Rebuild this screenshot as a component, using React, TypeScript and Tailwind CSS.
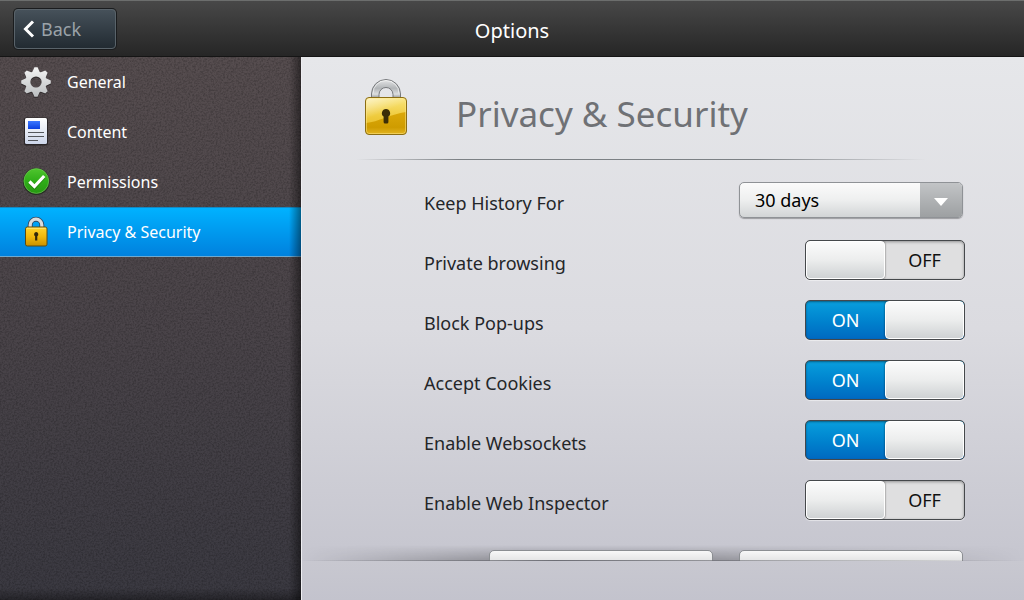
import { useState, type ReactNode } from "react";

function GearIcon() {
  const teeth = [0, 45, 90, 135, 180, 225, 270, 315];
  return (
    <svg viewBox="0 0 32 32" className="size-8" aria-hidden="true">
      <defs>
        <linearGradient id="gear" x1="0" y1="0" x2="0" y2="32" gradientUnits="userSpaceOnUse">
          <stop offset="0" stopColor="#f6f6f6" />
          <stop offset="1" stopColor="#b9bcbe" />
        </linearGradient>
        <mask id="gearShape">
          <circle cx="16" cy="16" r="10.600" fill="#fff" />
          {teeth.map((a) => (
            <path key={a} d="M11.600 7.500 14.400 1.200h3.200L20.400 7.500z" fill="#fff" transform={`rotate(${a} 16 16)`} />
          ))}
          <circle cx="16" cy="16" r="5.600" fill="#000" />
        </mask>
      </defs>
      <g transform="translate(0 1)">
        <rect width="32" height="32" fill="#171416" opacity=".6" mask="url(#gearShape)" />
      </g>
      <rect width="32" height="32" fill="url(#gear)" mask="url(#gearShape)" />
    </svg>
  );
}

function DocumentIcon() {
  return (
    <svg viewBox="0 0 32 32" className="size-8" aria-hidden="true">
      <defs>
        <linearGradient id="page" x1="0" y1="0" x2="0" y2="1">
          <stop offset="0" stopColor="#fff" />
          <stop offset="1" stopColor="#cdd6ea" />
        </linearGradient>
        <linearGradient id="pageBlue" x1="0" y1="0" x2="0" y2="1">
          <stop offset="0" stopColor="#3c78ff" />
          <stop offset="1" stopColor="#0a3fe0" />
        </linearGradient>
      </defs>
      <rect x="4" y="1.500" width="24" height="28" rx="2" fill="#1d191b" opacity=".7" />
      <rect x="5" y="2" width="22" height="26" rx="1.500" fill="url(#page)" />
      <rect x="8" y="5" width="12" height="8" fill="url(#pageBlue)" />
      <path d="M8 16.500h16M8 20.500h16M8 24.500h10" stroke="#54575c" strokeWidth="1" />
    </svg>
  );
}

function CheckIcon() {
  return (
    <svg viewBox="0 0 32 32" className="size-8" aria-hidden="true">
      <defs>
        <linearGradient id="disc" x1="0" y1="0" x2="0" y2="1">
          <stop offset="0" stopColor="#4fc52e" />
          <stop offset=".5" stopColor="#2fae18" />
          <stop offset="1" stopColor="#279812" />
        </linearGradient>
      </defs>
      <circle cx="16.3" cy="15.5" r="13.4" fill="#1c2a18" opacity=".8" />
      <circle cx="16.3" cy="15" r="12.4" fill="url(#disc)" stroke="#7bd45f" strokeWidth=".6" />
      <path d="m9.400 15.500 5 5 9.800-10.500" fill="none" stroke="#145c08" strokeWidth="3.400" opacity=".4" transform="translate(0 1)" />
      <path d="m9.400 15.500 5 5 9.800-10.500" fill="none" stroke="#fff" strokeWidth="3.200" />
    </svg>
  );
}

function SmallLockIcon() {
  return (
    <svg viewBox="0 0 32 32" className="size-8" aria-hidden="true">
      <defs>
        <linearGradient id="smallBody" x1="0" y1="0" x2="0" y2="1">
          <stop offset="0" stopColor="#ffd52e" />
          <stop offset=".5" stopColor="#f2b90c" />
          <stop offset="1" stopColor="#c99100" />
        </linearGradient>
      </defs>
      <path d="M10.200 12.500V9a5.800 5.800 0 0 1 11.600 0v3.500" fill="none" stroke="#2f4b63" strokeWidth="5" />
      <path d="M10.200 12.500V9a5.800 5.800 0 0 1 11.600 0v3.500" fill="none" stroke="#d9dcde" strokeWidth="3.200" />
      <rect x="5.500" y="11" width="21.500" height="19" rx="1.800" fill="url(#smallBody)" stroke="#5c4a10" />
      <path d="M6.800 12.300h19" stroke="#ffe98a" strokeWidth=".8" />
      <path d="M16.200 16a2.300 2.300 0 0 1 1.100 4.200V24.500h-2.200v-4.300a2.300 2.300 0 0 1 1.100-4.200z" fill="#33270a" />
    </svg>
  );
}

function LargeLockIcon() {
  return (
    <svg viewBox="0 0 44 60" className="h-15 w-11 shrink-0" aria-hidden="true">
      <defs>
        <linearGradient id="body" x1="0" y1="0" x2="0" y2="1">
          <stop offset="0" stopColor="#f9e57c" />
          <stop offset=".5" stopColor="#efcb3e" />
          <stop offset="1" stopColor="#e3b51c" />
        </linearGradient>
        <linearGradient id="shade" x1="0" y1="0" x2="0" y2="1">
          <stop offset="0" stopColor="#dba80a" />
          <stop offset=".7" stopColor="#cf9c00" />
          <stop offset="1" stopColor="#e2b320" />
        </linearGradient>
        <linearGradient id="glow" x1="0" y1="0" x2=".7" y2="1">
          <stop offset="0" stopColor="#fff" stopOpacity=".6" />
          <stop offset=".6" stopColor="#fff" stopOpacity="0" />
        </linearGradient>
        <linearGradient id="steel" x1="0" y1="0" x2="0" y2="1">
          <stop offset="0" stopColor="#e6e7e8" />
          <stop offset=".45" stopColor="#b2b5b8" />
          <stop offset=".75" stopColor="#dcdedf" />
          <stop offset="1" stopColor="#808386" />
        </linearGradient>
      </defs>
      <path
        d="M7.500 21V16a14.500 14.500 0 0 1 29 0v5h-7.500V16.500a7 7 0 0 0-14 0V21z"
        fill="url(#steel)"
        stroke="#77797c"
        strokeWidth="1"
      />
      <path d="M9 15.500a13 13 0 0 1 26 0" fill="none" stroke="#fff" strokeWidth="1" opacity=".6" />
      <rect x="1.500" y="19.500" width="41" height="37" rx="3.500" fill="url(#body)" />
      <path d="M2 45C14 44 27 36 42 34v19a3 3 0 0 1-3 3H5a3 3 0 0 1-3-3z" fill="url(#shade)" />
      <rect x="2" y="20" width="40" height="24" rx="3" fill="url(#glow)" />
      <rect x="2.500" y="20.500" width="39" height="35" rx="2.500" fill="none" stroke="#ffe98d" opacity=".5" />
      <rect x="1.500" y="19.500" width="41" height="37" rx="3.500" fill="none" stroke="#8b6d13" />
      <path
        d="M22 31a4.200 4.200 0 0 1 2.400 7.600V44a1.500 1.500 0 0 1-1.500 1.500h-1.800a1.500 1.500 0 0 1-1.500-1.500v-5.400A4.200 4.200 0 0 1 22 31z"
        fill="#3b2d07"
      />
    </svg>
  );
}

function LeatherTexture() {
  return (
    <svg className="pointer-events-none absolute inset-0 size-full opacity-20" aria-hidden="true">
      <filter id="grain">
        <feTurbulence type="fractalNoise" baseFrequency="0.55" numOctaves="3" />
        <feColorMatrix values="0 0 0 0 0  0 0 0 0 0  0 0 0 0 0  2.400 0 0 0 -0.900" />
      </filter>
      <rect width="100%" height="100%" filter="url(#grain)" />
    </svg>
  );
}

const sections: { name: string; icon: ReactNode }[] = [
  { name: "General", icon: <GearIcon /> },
  { name: "Content", icon: <DocumentIcon /> },
  { name: "Permissions", icon: <CheckIcon /> },
  { name: "Privacy & Security", icon: <SmallLockIcon /> },
];

const switches = [
  { name: "Private browsing", on: false },
  { name: "Block Pop-ups", on: true },
  { name: "Accept Cookies", on: true },
  { name: "Enable Websockets", on: true },
  { name: "Enable Web Inspector", on: false },
];

function SwitchRow({ name, initial }: { name: string; initial: boolean }) {
  const [on, setOn] = useState(initial);
  return (
    <label className="flex h-10 cursor-pointer items-center justify-between">
      <span className="pt-1.5">{name}</span>
      <span
        className={`relative flex h-10 w-40 overflow-hidden rounded-[5px] border border-[#45484b] leading-none shadow-[0_1px_1px_rgba(255,255,255,0.5)] has-focus-visible:outline-2 has-focus-visible:outline-sky-500 ${
          on
            ? "flex-row-reverse bg-linear-to-b from-[#0a9fdd] to-[#0069c0] text-white inset-shadow-[0_1px_2px_rgba(0,0,0,0.4)]"
            : "bg-[#dfdfe0] text-[#111] inset-shadow-[0_1px_3px_rgba(0,0,0,0.35)]"
        }`}
      >
        <input
          type="checkbox"
          role="switch"
          className="sr-only"
          checked={on}
          onChange={(e) => setOn(e.target.checked)}
        />
        <span className="w-1/2 rounded-[4px] border border-white bg-linear-to-b from-[#fbfbfb] via-[#eceded] to-[#cfd2d4] shadow-[0_0_2px_rgba(0,0,0,0.7)]" />
        <span className="flex flex-1 items-center justify-center">{on ? "ON" : "OFF"}</span>
      </span>
    </label>
  );
}

export default function App() {
  const [active, setActive] = useState("Privacy & Security");
  return (
    <div className="flex h-screen flex-col overflow-hidden bg-[#c8c8d0] font-['Noto_Sans',sans-serif]">
      <header className="grid h-[57px] shrink-0 grid-cols-[1fr_auto_1fr] items-center border-t border-b border-t-[#6c6e6d] border-b-[#151515] bg-linear-to-b from-[#484848] to-[#262626] px-3.5">
        <button
          type="button"
          className="flex h-10 w-[102px] items-center gap-1.5 rounded-[4px] border border-[#59636a] bg-linear-to-b from-[#46515a] to-[#222b32] pl-2 text-[18px] leading-none text-[#9ba3a9] shadow-[0_0_0_1px_#1a1c1e]"
        >
          <svg viewBox="0 0 12 18" className="h-[18px] w-3" aria-hidden="true">
            <path d="M10 1.500 2.500 9l7.500 7.500" fill="none" stroke="#fff" strokeWidth="3" />
          </svg>
          Back
        </button>
        <h1 className="pt-1 text-[20px] leading-6 text-white">Options</h1>
      </header>

      <div className="flex min-h-0 flex-1">
        <aside className="relative w-[301px] shrink-0 bg-linear-to-b from-[#564d4f] via-[#4a4449] via-50% to-[#3a3941]">
          <LeatherTexture />
          <nav className="relative flex flex-col">
            {sections.map(({ name, icon }) => (
              <button
                key={name}
                type="button"
                aria-current={name === active ? "page" : undefined}
                onClick={() => setActive(name)}
                className={`flex h-[50px] items-center gap-[15px] pl-5 text-left text-base text-white ${
                  name === active
                    ? "border-t border-b border-t-[#1289c4] border-b-[#6fa9cf] bg-linear-to-b from-[#00b2ff] to-[#0081de]"
                    : ""
                }`}
              >
                {icon}
                {name}
              </button>
            ))}
          </nav>
          <div className="pointer-events-none absolute inset-y-0 right-0 w-3 bg-linear-to-r from-transparent to-black/45" />
          <div className="pointer-events-none absolute inset-x-0 bottom-0 h-3 bg-linear-to-b from-transparent to-black/35" />
        </aside>

        <main className="flex min-w-0 flex-1 flex-col border-l border-[#eeeef2] bg-linear-to-b from-[#e6e7ea] via-[#dbdbe0] via-50% to-[#c2c2cc]">
          <div className="relative min-h-0 flex-1">
            <div className="pointer-events-none absolute inset-x-0 bottom-0 h-4 bg-linear-to-t from-black/30 to-transparent mask-[linear-gradient(to_right,transparent,black_30%,black_50%,transparent)]" />
            <div className="relative h-full overflow-y-auto [scrollbar-width:none]">
              <div className="mr-[98px] ml-[54px]">
                <div className="flex items-center gap-12 px-2 pt-[21px] pb-[21px]">
                  <LargeLockIcon />
                  <h2 className="pt-2.5 text-[35px] leading-none text-[#6f7175]">Privacy &amp; Security</h2>
                </div>
                <div className="h-px bg-[linear-gradient(to_right,transparent,#7c8084_18%,#7c8084_70%,transparent)]" />
              </div>

              <form className="mr-[59px] ml-[122px] flex flex-col gap-5 pt-5 pb-6 text-[18px] text-[#242629]">
                <div className="flex h-10 items-center justify-between">
                  <label htmlFor="history" className="pt-1.5">
                    Keep History For
                  </label>
                  <div className="relative mr-0.5 w-56">
                    <select
                      id="history"
                      defaultValue="30 days"
                      className="h-9 w-full appearance-none rounded-[5px] border border-[#8f9296] bg-linear-to-b from-[#fbfbfb] via-[#eeefef] to-[#d2d5d6] pr-12 pl-[15px] text-[18px] text-black shadow-[0_1px_1px_rgba(0,0,0,0.3)]"
                    >
                      <option>30 days</option>
                    </select>
                    <span className="pointer-events-none absolute inset-y-px right-px flex w-[42px] items-center justify-center rounded-r-[4px] bg-linear-to-b from-[#c2c4c6] to-[#9da0a2]">
                      <svg viewBox="0 0 14 8" className="mt-1 h-2 w-3.5" aria-hidden="true">
                        <path d="M0 0h14L7 8z" fill="#fff" />
                      </svg>
                    </span>
                  </div>
                </div>
                {switches.map((s) => (
                  <SwitchRow key={s.name} name={s.name} initial={s.on} />
                ))}
                <div className="mr-0.5 flex justify-end gap-[26px] pt-2.5">
                  {["Clear History", "Clear Cookies"].map((name) => (
                    <button
                      key={name}
                      type="button"
                      aria-label={name}
                      className="h-10 w-56 rounded-[5px] border border-[#8b8e92] bg-linear-to-b from-[#f8f8f8] via-[#d0d1d2] to-[#cfd2d4]"
                    />
                  ))}
                </div>
              </form>
            </div>
            <div className="pointer-events-none absolute inset-x-0 bottom-0 h-px bg-linear-to-r from-transparent via-[#6d6e75] via-35% to-transparent" />
          </div>
          <footer className="h-[39px] shrink-0 bg-linear-to-b from-[#c8c8d0] to-[#c3c3cd]" />
        </main>
      </div>
    </div>
  );
}
